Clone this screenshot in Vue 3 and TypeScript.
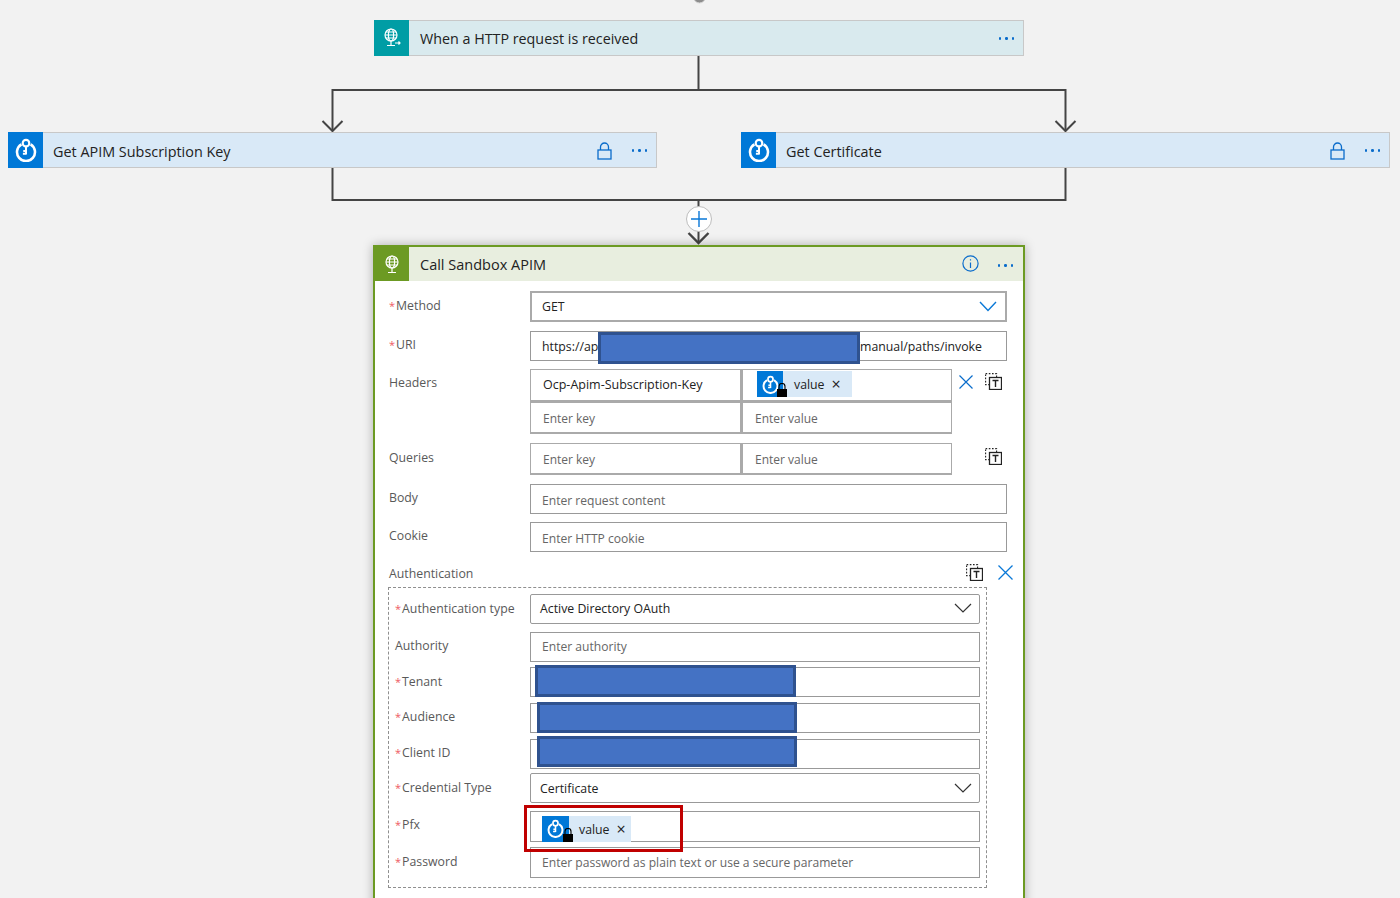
<script setup lang="ts">
const keyRing = 'M7 6.8a9.8 9.8 0 1 0 10 0'
</script>

<template>
  <div class="canvas">
    <svg class="wires" width="1400" height="898" viewBox="0 0 1400 898" aria-hidden="true">
      <g fill="none" stroke="#444" stroke-width="2">
        <path d="M698.5 56V90M332.5 131V90H1065.5V131" />
        <path d="M322.5 121L332.5 131L342.5 121M1055.5 121L1065.5 131L1075.5 121" />
        <path d="M332.5 168V200H1065.5V168M698.5 200V243" />
        <path d="M688.5 233L698.5 243L708.5 233" stroke-width="2.4" />
      </g>
      <circle cx="699.5" cy="-3" r="6" fill="#8d8d8d" stroke="#d8d8d8" />
    </svg>

    <div class="node trigger">
      <span class="tile tile-teal">
        <svg width="18" height="20" viewBox="0 0 18 20" fill="none" stroke="#fff" stroke-width="1.2">
          <circle cx="8" cy="7" r="6" />
          <ellipse cx="8" cy="7" rx="2.6" ry="6" />
          <path d="M2 7H14M3 4H13M3 10H13M8 13V17M4 17.5H12M12 15H17M15.5 13.5L17 15L15.5 16.5" />
        </svg>
      </span>
      <span class="node-title">When a HTTP request is received</span>
      <span class="dots dots-trigger"><i></i><i></i><i></i></span>
    </div>

    <div class="branches">
      <div class="node action">
        <span class="tile tile-blue">
          <svg width="22" height="24" viewBox="0 0 24 26" fill="none" stroke="#fff" stroke-width="2.8">
            <path :d="keyRing" />
            <circle cx="12" cy="5.5" r="3.6" stroke-width="2.4" />
            <path d="M12 9V18M12 14H9M12 17.2H8.6" stroke-width="2.2" />
          </svg>
        </span>
        <span class="node-title">Get APIM Subscription Key</span>
        <svg class="lock-outline" width="15" height="18" viewBox="0 0 15 18" fill="none" stroke="#0a6ccb" stroke-width="1.3">
          <rect x="1" y="8" width="13" height="9" />
          <path d="M3.5 8V5a4 4 0 0 1 8 0V8" />
        </svg>
        <span class="dots dots-action"><i></i><i></i><i></i></span>
      </div>
      <div class="node action">
        <span class="tile tile-blue">
          <svg width="22" height="24" viewBox="0 0 24 26" fill="none" stroke="#fff" stroke-width="2.8">
            <path :d="keyRing" />
            <circle cx="12" cy="5.5" r="3.6" stroke-width="2.4" />
            <path d="M12 9V18M12 14H9M12 17.2H8.6" stroke-width="2.2" />
          </svg>
        </span>
        <span class="node-title">Get Certificate</span>
        <svg class="lock-outline" width="15" height="18" viewBox="0 0 15 18" fill="none" stroke="#0a6ccb" stroke-width="1.3">
          <rect x="1" y="8" width="13" height="9" />
          <path d="M3.5 8V5a4 4 0 0 1 8 0V8" />
        </svg>
        <span class="dots dots-action"><i></i><i></i><i></i></span>
      </div>
    </div>

    <button class="add" type="button" aria-label="Add step">
      <svg width="16" height="16" viewBox="0 0 16 16" stroke="#0a78d7" stroke-width="1.4"><path d="M8 0V16M0 8H16" /></svg>
    </button>

    <section class="card">
      <header class="card-head">
        <span class="tile tile-green">
          <svg width="16" height="18" viewBox="0 0 16 18" fill="none" stroke="#fff" stroke-width="1.2">
            <circle cx="8" cy="7" r="6" />
            <ellipse cx="8" cy="7" rx="2.6" ry="6" />
            <path d="M2 7H14M3 4H13M3 10H13M8 13V17M4 17.5H12" />
          </svg>
        </span>
        <span class="node-title">Call Sandbox APIM</span>
        <svg class="info" width="17" height="17" viewBox="0 0 17 17" fill="none" stroke="#0a6ccb" stroke-width="1.2">
          <circle cx="8.5" cy="8.5" r="7.6" />
          <path d="M8.5 7.4V13M8.5 4.2V5.6" />
        </svg>
        <span class="dots dots-card"><i></i><i></i><i></i></span>
      </header>

      <div class="form">
        <div class="row">
          <label class="lbl lbl-low"><b>*</b>Method</label>
          <div class="field field-select field-thick h31">GET
            <svg class="chev" width="18" height="11" viewBox="0 0 18 11" fill="none" stroke="#0a78d7" stroke-width="1.4"><path d="M1 1L9 9.5L17 1" /></svg>
          </div>
        </div>

        <div class="row mt9">
          <label class="lbl"><b>*</b>URI</label>
          <div class="field field-value h30 uri">
            <span>https://ap</span><span class="uri-end">/manual/paths/invoke</span>
            <span class="redact redact-uri"></span>
          </div>
        </div>

        <div class="row mt8">
          <label class="lbl">Headers</label>
          <div class="kv-line">
            <div class="kv-table">
              <div class="kv-cell kv-value">Ocp-Apim-Subscription-Key</div>
              <div class="kv-cell">
                <span class="token token-header">
                  <span class="token-icon">
                    <svg width="17" height="19" viewBox="0 0 24 26" fill="none" stroke="#fff" stroke-width="2.8">
                      <path :d="keyRing" />
                      <circle cx="12" cy="5.5" r="3.6" stroke-width="2.4" />
                      <path d="M12 9V18M12 14H9M12 17.2H8.6" stroke-width="2.2" />
                    </svg>
                    <svg class="lock-solid" width="10" height="14" viewBox="0 0 10 14"><path d="M2 6V3.5a3 3 0 0 1 6 0V6" fill="none" stroke="#000" stroke-width="1.1" /><rect y="6" width="10" height="8" /></svg>
                  </span>
                  <span class="token-text">value</span>
                  <span class="token-x">×</span>
                </span>
              </div>
              <div class="kv-cell kv-ph">Enter key</div>
              <div class="kv-cell kv-ph">Enter value</div>
            </div>
            <svg class="x-icon" width="14" height="14" viewBox="0 0 14 14" stroke="#0a6ccb" stroke-width="1.2"><path d="M0.5 0.5L13.5 13.5M13.5 0.5L0.5 13.5" /></svg>
            <svg class="copy-icon" width="17" height="17" viewBox="0 0 17 17" fill="none" stroke="#222" stroke-width="1.1">
              <rect x="0.6" y="0.6" width="11" height="11" stroke-dasharray="1.6 1.6" />
              <rect x="4.5" y="4.5" width="12" height="12" fill="#fff" stroke-width="1.3" />
              <path d="M7.5 7.5H13.5M10.5 7.5V14" stroke-width="1.4" />
            </svg>
          </div>
        </div>

        <div class="row mt9">
          <label class="lbl lbl-low">Queries</label>
          <div class="kv-line">
            <div class="kv-table kv-single">
              <div class="kv-cell kv-ph">Enter key</div>
              <div class="kv-cell kv-ph">Enter value</div>
            </div>
            <svg class="copy-icon copy-only" width="17" height="17" viewBox="0 0 17 17" fill="none" stroke="#222" stroke-width="1.1">
              <rect x="0.6" y="0.6" width="11" height="11" stroke-dasharray="1.6 1.6" />
              <rect x="4.5" y="4.5" width="12" height="12" fill="#fff" stroke-width="1.3" />
              <path d="M7.5 7.5H13.5M10.5 7.5V14" stroke-width="1.4" />
            </svg>
          </div>
        </div>

        <div class="row mt9">
          <label class="lbl">Body</label>
          <div class="field h30 text-low">Enter request content</div>
        </div>

        <div class="row mt8">
          <label class="lbl">Cookie</label>
          <div class="field h30 text-low">Enter HTTP cookie</div>
        </div>

        <div class="auth-head">
          <span class="auth-title">Authentication</span>
          <svg class="copy-icon auth-copy" width="17" height="17" viewBox="0 0 17 17" fill="none" stroke="#222" stroke-width="1.1">
            <rect x="0.6" y="0.6" width="11" height="11" stroke-dasharray="1.6 1.6" />
            <rect x="4.5" y="4.5" width="12" height="12" fill="#fff" stroke-width="1.3" />
            <path d="M7.5 7.5H13.5M10.5 7.5V14" stroke-width="1.4" />
          </svg>
          <svg class="auth-x" width="15" height="15" viewBox="0 0 15 15" stroke="#0a78d7" stroke-width="1.3"><path d="M0.5 0.5L14.5 14.5M14.5 0.5L0.5 14.5" /></svg>
        </div>

        <div class="auth-box">
          <div class="row row-auth">
            <label class="lbl lbl-low"><b>*</b>Authentication type</label>
            <div class="field field-select field-indent h30 text-high">Active Directory OAuth
              <svg class="chev" width="18" height="10" viewBox="0 0 18 10" fill="none" stroke="#333" stroke-width="1.2"><path d="M1 1L9 9L17 1" /></svg>
            </div>
          </div>
          <div class="row row-auth mt8">
            <label class="lbl">Authority</label>
            <div class="field h30 text-high">Enter authority</div>
          </div>
          <div class="row row-auth mt5">
            <label class="lbl lbl-low"><b>*</b>Tenant</label>
            <div class="field h30"><span class="redact redact-tenant"></span></div>
          </div>
          <div class="row row-auth mt6">
            <label class="lbl"><b>*</b>Audience</label>
            <div class="field h30"><span class="redact redact-audience"></span></div>
          </div>
          <div class="row row-auth mt6">
            <label class="lbl"><b>*</b>Client ID</label>
            <div class="field h30"><span class="redact redact-client"></span></div>
          </div>
          <div class="row row-auth mt4">
            <label class="lbl lbl-low"><b>*</b>Credential Type</label>
            <div class="field field-select field-indent h30">Certificate
              <svg class="chev" width="18" height="10" viewBox="0 0 18 10" fill="none" stroke="#333" stroke-width="1.2"><path d="M1 1L9 9L17 1" /></svg>
            </div>
          </div>
          <div class="row row-auth mt8">
            <label class="lbl"><b>*</b>Pfx</label>
            <div class="field h31">
              <span class="token token-pfx">
                <span class="token-icon">
                  <svg width="17" height="19" viewBox="0 0 24 26" fill="none" stroke="#fff" stroke-width="2.8">
                    <path :d="keyRing" />
                    <circle cx="12" cy="5.5" r="3.6" stroke-width="2.4" />
                    <path d="M12 9V18M12 14H9M12 17.2H8.6" stroke-width="2.2" />
                  </svg>
                  <svg class="lock-solid" width="10" height="14" viewBox="0 0 10 14"><path d="M2 6V3.5a3 3 0 0 1 6 0V6" fill="none" stroke="#000" stroke-width="1.1" /><rect y="6" width="10" height="8" /></svg>
                </span>
                <span class="token-text">value</span>
                <span class="token-x">×</span>
              </span>
              <span class="callout"></span>
            </div>
          </div>
          <div class="row row-auth mt5">
            <label class="lbl lbl-low"><b>*</b>Password</label>
            <div class="field h31">Enter password as plain text or use a secure parameter</div>
          </div>
        </div>
      </div>
    </section>
  </div>
</template>

<style>
html, body { margin: 0; background: #f2f2f2; }
</style>

<style scoped>
.canvas {
  position: relative;
  width: 1400px;
  height: 898px;
  overflow: hidden;
  background: #f2f2f2;
  padding-top: 20px;
  box-sizing: border-box;
  font-family: "Open Sans", "Noto Sans", sans-serif;
  font-size: 12.3px;
  color: #222;
}
.wires { position: absolute; left: 0; top: 0; overflow: visible; }
.node {
  position: relative;
  display: flex;
  align-items: center;
  width: 650px;
  height: 36px;
  box-sizing: border-box;
  border: 1px solid #c8c8c8;
}
.trigger { margin-left: 374px; background: #d9eaee; }
.branches { position: relative; display: flex; gap: 84px; margin: 76px 0 0 8px; }
.action { width: 649px; background: #d9e9f7; }
.tile {
  flex: none;
  display: flex;
  align-items: center;
  justify-content: center;
  width: 35px;
  height: 36px;
  margin: -1px 0 -1px -1px;
}
.tile-teal { background: #009da5; }
.tile-blue { background: #0078d7; }
.tile-green { background: #6c9a23; }
.node-title {
  margin-left: 10px;
  font-size: 14.3px;
  color: #222;
  white-space: nowrap;
}
.trigger .node-title { margin-left: 11px; }
.action .node-title { padding-top: 2px; font-size: 14.4px; }
.lock-outline { position: absolute; right: 44px; top: 9px; }
.dots { position: absolute; display: flex; gap: 4px; }
.dots i { width: 2.5px; height: 2.5px; border-radius: 50%; background: #0a6ccb; }
.dots-trigger { right: 9px; top: 16px; }
.dots-action { right: 9px; top: 16px; }
.dots-card { right: 10px; top: 17px; }

.add {
  position: absolute;
  left: 686px;
  top: 206px;
  z-index: 2;
  display: flex;
  align-items: center;
  justify-content: center;
  width: 26px;
  height: 26px;
  padding: 0;
  border: 1px solid #bdbdbd;
  border-radius: 50%;
  background: #fff;
}

.card {
  position: relative;
  width: 652px;
  height: 700px;
  margin: 77px 0 0 373px;
  box-sizing: border-box;
  border: 2px solid #6c9a23;
  border-bottom: 0;
  background: #fff;
  box-shadow: 0 0 10px rgba(0, 0, 0, 0.28);
}
.card-head {
  position: relative;
  display: flex;
  align-items: center;
  height: 34px;
  background: #e8eedf;
}
.card-head .tile { width: 34px; height: 34px; margin: 0; }
.card-head .node-title { margin-left: 11px; font-size: 14.5px; }
.info { position: absolute; right: 44px; top: 8px; }

.form { padding: 10px 0 0 14px; }
.row { display: grid; grid-template-columns: 141px 477px; align-items: start; }
.row-auth { grid-template-columns: 135px 450px; }
.lbl { padding-top: 5px; line-height: 18px; color: #595959; white-space: nowrap; }
.lbl-low { padding-top: 6px; }
.lbl b { font-weight: 400; font-size: 11px; color: #ee5a63; margin-right: 1px; }
.auth-title { padding-top: 2px; color: #595959; }
.mt4 { margin-top: 4px; }
.mt5 { margin-top: 5px; }
.mt6 { margin-top: 6px; }
.mt8 { margin-top: 8px; }
.mt9 { margin-top: 9px; }

.field {
  position: relative;
  display: flex;
  align-items: center;
  box-sizing: border-box;
  padding-left: 11px;
  border: 1px solid #999;
  font-size: 12.1px;
  color: #666;
  background: #fff;
  white-space: nowrap;
}
.h30 { height: 30px; }
.h31 { height: 31px; }
.text-low { padding-top: 2px; }
.text-high { padding-bottom: 2px; }
.field-select, .field-value { color: #222; font-size: 12.3px; }
.field-select { justify-content: space-between; padding-right: 8px; }
.field-thick { border: 2px solid #aaa; padding-left: 10px; }
.field-indent { padding-left: 9px; padding-right: 7px; border-radius: 2px; }
.field-indent .chev { margin-top: 0; }
.uri { justify-content: space-between; padding-right: 24px; }
.uri-end { color: #222; }
.chev { flex: none; }

.redact {
  position: absolute;
  box-sizing: border-box;
  height: 32px;
  width: 262px;
  background: #4472c4;
  border: 3px solid #2f528f;
}
.redact-uri { left: 67px; top: 0; }
.redact-tenant { left: 4px; top: -3px; width: 261px; }
.redact-audience { left: 6px; top: -2px; width: 260px; height: 31px; }
.redact-client { left: 6px; top: -4px; width: 260px; height: 31px; }

.kv-line { display: flex; align-items: flex-start; }
.kv-table {
  display: grid;
  grid-template-columns: 211px 211px;
  grid-template-rows: 33px 32px;
  width: 422px;
  flex: none;
}
.kv-single { grid-template-rows: 32px; }
.kv-cell {
  display: flex;
  align-items: center;
  box-sizing: border-box;
  padding-left: 12px;
  border: 2px solid #aaa;
  border-width: 1px 1px 2px 1px;
  background: #fff;
}
.kv-value { padding-bottom: 2px; color: #222; font-size: 12.5px; }
.kv-ph { padding-top: 2px; color: #666; font-size: 12px; }
.kv-cell:nth-child(even) { border-left-width: 2px; }
.token {
  display: flex;
  align-items: center;
  height: 26px;
  background: #d9e9f7;
  color: #222;
  font-size: 12.3px;
}
.token-icon {
  position: relative;
  display: flex;
  align-items: center;
  justify-content: center;
  width: 26px;
  height: 100%;
  background: #0078d7;
}
.token-header { margin: -2px 0 0 2px; width: 95px; }
.token-pfx { width: 89px; margin-top: 4px; }
.token-pfx .token-icon { width: 27px; }
.lock-solid { position: absolute; right: -4px; bottom: 0; }
.token-text { margin-left: 11px; }
.token-x { margin-left: 7px; font-size: 16px; line-height: 16px; }
.token-pfx .token-text { margin-left: 10px; padding-top: 2px; }
.x-icon { flex: none; margin: 6px 0 0 7px; }
.copy-icon { flex: none; }
.kv-line > .copy-icon { margin: 4px 0 0 12px; }
.kv-line > .copy-only { margin: 5px 0 0 33px; }

.auth-head {
  display: flex;
  align-items: center;
  height: 16px;
  margin-top: 12px;
  width: 624px;
}
.auth-copy { margin-left: auto; }
.auth-x { margin-left: 15px; }
.auth-box {
  box-sizing: border-box;
  width: 599px;
  margin: 7px 0 0 -1px;
  padding: 6px 6px 9px 6px;
  border: 1px dashed #8f8f8f;
}
.callout {
  position: absolute;
  left: -7px;
  top: -7px;
  z-index: 3;
  width: 159px;
  height: 47px;
  box-sizing: border-box;
  border: 3px solid #c00000;
}
</style>
